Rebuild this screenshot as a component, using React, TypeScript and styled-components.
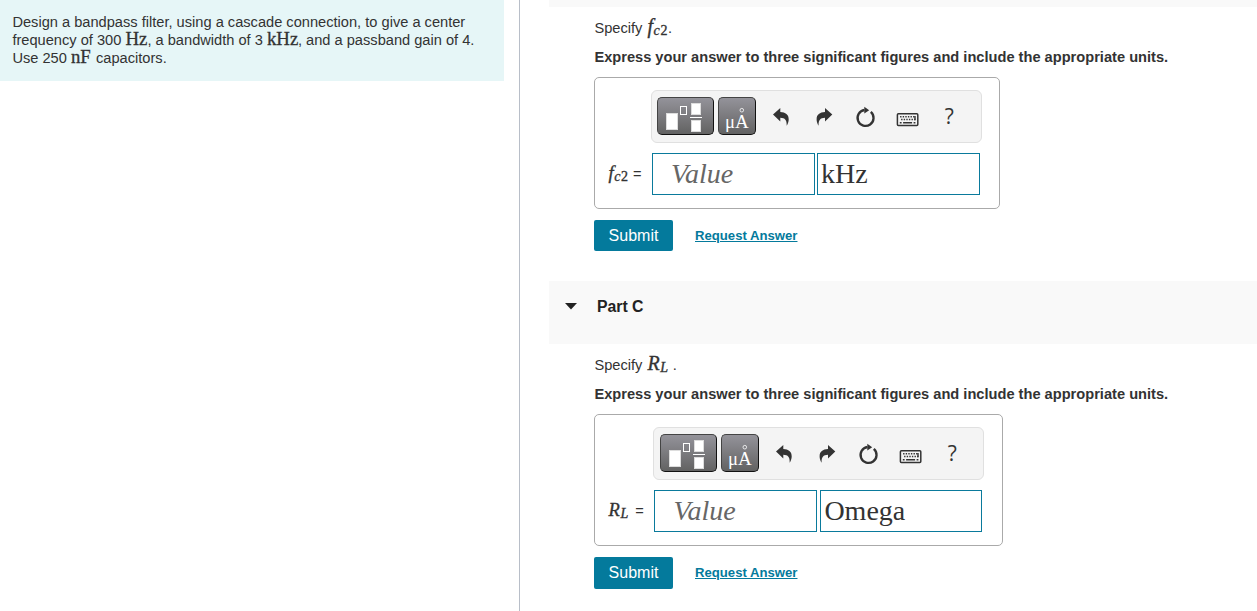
import React from "react";
import styled, { createGlobalStyle } from "styled-components";

const GlobalStyle = createGlobalStyle`
  * {
    box-sizing: border-box;
  }

  body {
    margin: 0;
    background: #fff;
    color: #333;
    font-family: "Liberation Sans", Arial, sans-serif;
    font-size: 14.64px;
    line-height: 18px;
    overflow: hidden;
  }
`;

const Page = styled.div`
  display: flex;
  height: 611px;
`;

const ProblemPane = styled.aside`
  flex: 0 0 520px;
  border-right: 1px solid #b8bec8;
`;

const ProblemText = styled.div`
  width: 504px;
  height: 81px;
  padding: 13px 12.4px;
  background: #e6f6f7;
  white-space: nowrap;
`;

const Unit = styled.span<{ $width: number }>`
  display: inline-block;
  width: ${(props) => props.$width}px;
  font-family: "Liberation Serif", serif;
  font-size: 18.8px;
  line-height: 16px;
  -webkit-text-stroke: 0.3px #333;
`;

const AnswerPane = styled.main`
  flex: 1;
  padding-left: 29px;
`;

const HeaderEnd = styled.div`
  height: 6.5px;
  background: #f9f9f9;
`;

const PartHeader = styled.header`
  display: flex;
  align-items: flex-start;
  height: 63px;
  margin-top: 30px;
  padding: 17px 0 0 16px;
  background: #f9f9f9;
`;

const Caret = styled.svg`
  width: 12px;
  height: 6.5px;
  margin: 5px 20px 0 0;
  fill: #222;
`;

const PartTitle = styled.h2`
  margin: 0;
  color: #222;
  font-size: 15.8px;
  line-height: 18px;
`;

const PartBody = styled.section<{ $top: number }>`
  padding: ${(props) => props.$top}px 0 0 45.4px;
`;

const Line = styled.p<{ $bold?: boolean }>`
  height: 18px;
  margin: 0 0 ${(props) => (props.$bold ? 11 : 12)}px;
  font-weight: ${(props) => (props.$bold ? "bold" : "normal")};
  white-space: nowrap;
`;

const MathText = styled.span<{ $size: number; $indent?: number }>`
  display: inline-block;
  margin-left: ${(props) => props.$indent || 0}px;
  font-family: "Liberation Serif", serif;
  font-size: ${(props) => props.$size}px;
  font-style: italic;
  letter-spacing: 0.6px;
  line-height: 16px;
  -webkit-text-stroke: 0.35px #333;
`;

const Sub = styled.span`
  position: relative;
  top: 1.5px;
  font-size: 14px;
`;

const Upright = styled.span`
  font-style: normal;
`;

const Card = styled.div<{ $width: number }>`
  display: flex;
  width: ${(props) => props.$width}px;
  height: 132px;
  margin-left: -0.4px;
  padding-top: 12px;
  border: 1px solid #aaa;
  border-radius: 5px;
`;

const Label = styled.div<{ $width: number }>`
  display: flex;
  flex: 0 0 ${(props) => props.$width}px;
  justify-content: space-between;
  align-items: baseline;
  height: 93px;
  padding: 75px 9.5px 0 13.5px;
  white-space: nowrap;
`;

const Toolbar = styled.div`
  display: flex;
  align-items: center;
  width: 331px;
  height: 53px;
  padding: 0 0 2px 5.3px;
  background: #f4f4f4;
  border: 1px solid #e0e0e0;
  border-radius: 6px;
`;

const DarkButton = styled.button<{ $width: number }>`
  width: ${(props) => props.$width}px;
  height: 38px;
  margin-right: 4px;
  padding: 0;
  border: 1px solid #111;
  border-top-color: #444;
  border-left-color: #444;
  border-radius: 5px;
  background: linear-gradient(#94939a, #626262);

  svg {
    display: block;
    margin: -1px;
  }
`;

const ToolButton = styled.button`
  width: 42px;
  height: 38px;
  padding: 0;
  border: 0;
  background: none;
  color: #333;

  svg {
    display: block;
  }
`;

const Fields = styled.div<{ $gap: number }>`
  display: flex;
  gap: ${(props) => props.$gap}px;
  margin: 10px 0 0 1px;
`;

const Field = styled.input<{ $width: number }>`
  width: ${(props) => props.$width}px;
  height: 42px;
  padding: 0 0 0 3px;
  border: 1px solid #0a7a9c;
  color: #333;
  background: #fff;
  font-family: "Liberation Serif", serif;
  font-size: 28px;
  outline: none;

  &::placeholder {
    padding-left: 15px;
    color: #666;
    font-style: italic;
    opacity: 1;
  }
`;

const Actions = styled.div`
  display: flex;
  align-items: center;
  margin: 11px 0 0 -0.4px;
`;

const Submit = styled.button<{ $height: number }>`
  width: 79px;
  height: ${(props) => props.$height}px;
  margin-right: 22px;
  padding: 0;
  border: 0;
  border-radius: 2px;
  background: #047a9c;
  color: #fff;
  font-family: inherit;
  font-size: 16px;
`;

const RequestLink = styled.a`
  color: #047a9c;
  font-size: 13.15px;
  font-weight: bold;
  text-decoration: underline;
`;

const EditorToolbar: React.FC = () => (
  <Toolbar>
    <DarkButton $width={57}>
      <svg width="57" height="38" fill="#fff">
        <rect x="9.5" y="16.5" width="11" height="16" stroke="#ddd" />
        <rect x="23.5" y="9.5" width="6" height="8" fill="none" stroke="#fff" />
        <rect x="34.5" y="6.5" width="9" height="11" stroke="#ddd" />
        <rect x="33" y="20" width="12" height="1" />
        <rect x="34.5" y="23.5" width="9" height="11" stroke="#ddd" />
      </svg>
    </DarkButton>
    <DarkButton $width={38}>
      <svg width="38" height="38" fill="#fff" fontFamily="Liberation Serif, serif" fontSize="19">
        <text x="7" y="31" textLength="10" lengthAdjust="spacingAndGlyphs">μ</text>
        <text x="17" y="31">A</text>
        <circle cx="23.8" cy="13.2" r="1.8" fill="none" stroke="#fff" strokeWidth=".8" />
      </svg>
    </DarkButton>
    <ToolButton aria-label="undo">
      <svg width="42" height="38" fill="currentColor">
        <path d="M13 17.5 20.3 11v4.1c5.2.2 8.4 2.6 8.4 7.1 0 2.3-.7 4.5-2 6.5.2-5.6-1.6-7.7-6.4-7.9v3.7z" />
      </svg>
    </ToolButton>
    <ToolButton aria-label="redo">
      <svg width="42" height="38" fill="currentColor">
        <path d="M30.3 17.5 23 11v4.1c-5.2.2-8.4 2.6-8.4 7.1 0 2.3.7 4.5 2 6.5-.2-5.6 1.6-7.7 6.4-7.9v3.7z" />
      </svg>
    </ToolButton>
    <ToolButton aria-label="reset">
      <svg width="42" height="38">
        <path d="M26.8 14.9A8 8 0 1 1 20.5 13" fill="none" stroke="currentColor" strokeWidth="2.3" />
        <path d="M20.3 9.8l4.9 3.5-4.9 3.3z" fill="currentColor" />
      </svg>
    </ToolButton>
    <ToolButton aria-label="keyboard">
      <svg width="42" height="38" fill="none" stroke="currentColor">
        <rect x="11.4" y="16.8" width="20.4" height="11.8" rx="1" strokeWidth="1.5" />
        <path d="M14.1 19.7H28.6M15.1 22.5H29.4" strokeWidth="1.5" strokeDasharray="1.4 1.2" />
        <path d="M13.8 25.7h1.8M17.1 25.7h9M27.6 25.7h1.8M29 19v4.2" strokeWidth="1.4" />
      </svg>
    </ToolButton>
    <ToolButton aria-label="help">
      <svg width="42" height="38">
        <text x="16.8" y="27" fill="#333" fontFamily="Open Sans, sans-serif" fontSize="21">?</text>
      </svg>
    </ToolButton>
  </Toolbar>
);

interface IAnswerProps {
  symbol: React.ReactNode;
  unit: string;
  cardWidth: number;
  labelWidth: number;
  fieldGap: number;
  unitWidth: number;
  submitHeight: number;
}

const Answer: React.FC<IAnswerProps> = ({
  symbol,
  unit,
  cardWidth,
  labelWidth,
  fieldGap,
  unitWidth,
  submitHeight,
}) => (
  <>
    <Card $width={cardWidth}>
      <Label $width={labelWidth}>
        <MathText $size={18.5}>{symbol}</MathText>
        <span>=</span>
      </Label>
      <div>
        <EditorToolbar />
        <Fields $gap={fieldGap}>
          <Field $width={163} placeholder="Value" />
          <Field $width={unitWidth} defaultValue={unit} />
        </Fields>
      </div>
    </Card>
    <Actions>
      <Submit $height={submitHeight}>Submit</Submit>
      <RequestLink>Request Answer</RequestLink>
    </Actions>
  </>
);

const cutoff = (
  <>
    f<Sub>c<Upright>2</Upright></Sub>
  </>
);

const load = (
  <>
    R<Sub>L</Sub>
  </>
);

const App: React.FC = () => (
  <>
    <GlobalStyle />
    <Page>
      <ProblemPane>
        <ProblemText>
          Design a bandpass filter, using a cascade connection, to give a center
          <br />
          frequency of 300 <Unit $width={22}>Hz</Unit>, a bandwidth of 3{" "}
          <Unit $width={31}>kHz</Unit>, and a passband gain of 4.
          <br />
          Use 250 <Unit $width={21}>nF</Unit> capacitors.
        </ProblemText>
      </ProblemPane>
      <AnswerPane>
        <HeaderEnd />
        <PartBody $top={11.5}>
          <Line>
            Specify <MathText $size={20} $indent={1}>{cutoff}</MathText>.
          </Line>
          <Line $bold>
            Express your answer to three significant figures and include the appropriate units.
          </Line>
          <Answer
            symbol={cutoff}
            unit="kHz"
            cardWidth={406}
            labelWidth={56}
            fieldGap={2}
            unitWidth={163}
            submitHeight={31}
          />
        </PartBody>
        <PartHeader>
          <Caret viewBox="0 0 13 7" preserveAspectRatio="none">
            <path d="M0 0h13L6.5 7z" />
          </Caret>
          <PartTitle>Part C</PartTitle>
        </PartHeader>
        <PartBody $top={11}>
          <Line>
            Specify <MathText $size={20} $indent={1}>{load}</MathText> .
          </Line>
          <Line $bold>
            Express your answer to three significant figures and include the appropriate units.
          </Line>
          <Answer
            symbol={load}
            unit="Omega"
            cardWidth={409}
            labelWidth={58.4}
            fieldGap={3}
            unitWidth={162}
            submitHeight={32}
          />
        </PartBody>
      </AnswerPane>
    </Page>
  </>
);

export default App;
